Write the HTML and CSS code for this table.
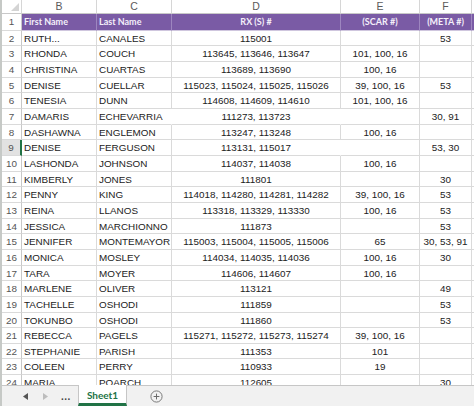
FILE: index.html
```html
<!DOCTYPE html>
<html>
<head>
<meta charset="utf-8">
<link rel="stylesheet" href="styles.css">
</head>
<body>
<div class="app">
  <div class="grid">
    <div class="row colhead">
      <div class="c corner"><svg width="8" height="8" viewBox="0 0 8 8"><polygon points="8,0 8,8 0,8" fill="#d4d4d4"/></svg></div>
      <div class="c">B</div><div class="c">C</div><div class="c">D</div><div class="c">E</div><div class="c">F</div><div class="c end"></div>
    </div>
    <div class="row hdr">
      <div class="c rh">1</div>
      <div class="c p l">First Name</div><div class="c p l">Last Name</div><div class="c p">RX (S) #</div><div class="c p">(SCAR #)</div><div class="c p">(META #)</div><div class="c p end"></div>
    </div>
    <div class="row"><div class="c rh">2</div><div class="c l">RUTH...</div><div class="c l">CANALES</div><div class="c">115001</div><div class="c"></div><div class="c">53</div><div class="c end"></div></div>
    <div class="row"><div class="c rh">3</div><div class="c l">RHONDA</div><div class="c l">COUCH</div><div class="c">113645, 113646, 113647</div><div class="c">101, 100, 16</div><div class="c"></div><div class="c end"></div></div>
    <div class="row"><div class="c rh">4</div><div class="c l">CHRISTINA</div><div class="c l">CUARTAS</div><div class="c">113689, 113690</div><div class="c">100, 16</div><div class="c"></div><div class="c end"></div></div>
    <div class="row"><div class="c rh">5</div><div class="c l">DENISE</div><div class="c l">CUELLAR</div><div class="c">115023, 115024, 115025, 115026</div><div class="c">39, 100, 16</div><div class="c">53</div><div class="c end"></div></div>
    <div class="row"><div class="c rh">6</div><div class="c l">TENESIA</div><div class="c l">DUNN</div><div class="c">114608, 114609, 114610</div><div class="c">101, 100, 16</div><div class="c"></div><div class="c end"></div></div>
    <div class="row"><div class="c rh">7</div><div class="c l">DAMARIS</div><div class="c l nr">ECHEVARRIA</div><div class="c nr">111273, 113723</div><div class="c"></div><div class="c">30, 91</div><div class="c end"></div></div>
    <div class="row"><div class="c rh">8</div><div class="c l">DASHAWNA</div><div class="c l">ENGLEMON</div><div class="c">113247, 113248</div><div class="c">100, 16</div><div class="c"></div><div class="c end"></div></div>
    <div class="row"><div class="c rh sel">9</div><div class="c l">DENISE</div><div class="c l">FERGUSON</div><div class="c nr">113131, 115017</div><div class="c"></div><div class="c">53, 30</div><div class="c end"></div></div>
    <div class="row"><div class="c rh">10</div><div class="c l">LASHONDA</div><div class="c l">JOHNSON</div><div class="c">114037, 114038</div><div class="c">100, 16</div><div class="c"></div><div class="c end"></div></div>
    <div class="row"><div class="c rh">11</div><div class="c l">KIMBERLY</div><div class="c l">JONES</div><div class="c">111801</div><div class="c"></div><div class="c">30</div><div class="c end"></div></div>
    <div class="row"><div class="c rh">12</div><div class="c l">PENNY</div><div class="c l">KING</div><div class="c">114018, 114280, 114281, 114282</div><div class="c">39, 100, 16</div><div class="c">53</div><div class="c end"></div></div>
    <div class="row"><div class="c rh">13</div><div class="c l">REINA</div><div class="c l">LLANOS</div><div class="c">113318, 113329, 113330</div><div class="c">100, 16</div><div class="c">53</div><div class="c end"></div></div>
    <div class="row"><div class="c rh">14</div><div class="c l">JESSICA</div><div class="c l">MARCHIONNO</div><div class="c">111873</div><div class="c"></div><div class="c">53</div><div class="c end"></div></div>
    <div class="row"><div class="c rh">15</div><div class="c l">JENNIFER</div><div class="c l">MONTEMAYOR</div><div class="c">115003, 115004, 115005, 115006</div><div class="c">65</div><div class="c">30, 53, 91</div><div class="c end"></div></div>
    <div class="row"><div class="c rh">16</div><div class="c l">MONICA</div><div class="c l">MOSLEY</div><div class="c">114034, 114035, 114036</div><div class="c">100, 16</div><div class="c">30</div><div class="c end"></div></div>
    <div class="row"><div class="c rh">17</div><div class="c l">TARA</div><div class="c l">MOYER</div><div class="c">114606, 114607</div><div class="c">100, 16</div><div class="c"></div><div class="c end"></div></div>
    <div class="row"><div class="c rh">18</div><div class="c l">MARLENE</div><div class="c l">OLIVER</div><div class="c">113121</div><div class="c"></div><div class="c">49</div><div class="c end"></div></div>
    <div class="row"><div class="c rh">19</div><div class="c l">TACHELLE</div><div class="c l">OSHODI</div><div class="c">111859</div><div class="c"></div><div class="c">53</div><div class="c end"></div></div>
    <div class="row"><div class="c rh">20</div><div class="c l">TOKUNBO</div><div class="c l">OSHODI</div><div class="c">111860</div><div class="c"></div><div class="c">53</div><div class="c end"></div></div>
    <div class="row"><div class="c rh">21</div><div class="c l">REBECCA</div><div class="c l">PAGELS</div><div class="c">115271, 115272, 115273, 115274</div><div class="c">39, 100, 16</div><div class="c"></div><div class="c end"></div></div>
    <div class="row"><div class="c rh">22</div><div class="c l">STEPHANIE</div><div class="c l">PARISH</div><div class="c">111353</div><div class="c">101</div><div class="c"></div><div class="c end"></div></div>
    <div class="row"><div class="c rh">23</div><div class="c l">COLEEN</div><div class="c l">PERRY</div><div class="c">110933</div><div class="c">19</div><div class="c"></div><div class="c end"></div></div>
    <div class="row"><div class="c rh">24</div><div class="c l">MARIA</div><div class="c l">POARCH</div><div class="c">112605</div><div class="c"></div><div class="c">30</div><div class="c end"></div></div>
  </div>
  <div class="tabs">
    <div class="nav">
      <svg class="arr" width="5" height="7" viewBox="0 0 5 7"><polygon points="5,0 5,7 0,3.5" fill="#555"/></svg>
      <svg class="arr arr-r" width="5" height="7" viewBox="0 0 5 7"><polygon points="0,0 0,7 5,3.5" fill="#bdbdbd"/></svg>
      <span class="dots">...</span>
    </div>
    <div class="tab">Sheet1</div>
    <div class="add"><svg width="13" height="13" viewBox="0 0 13 13"><circle cx="6.5" cy="6.5" r="5.6" fill="none" stroke="#7a7a7a" stroke-width="1"/><path d="M6.5 3.6v5.8M3.6 6.5h5.8" stroke="#6a6a6a" stroke-width="1"/></svg></div>
  </div>
</div>
</body>
</html>
```
FILE: styles.css
```css
html, body {
  margin: 0;
  padding: 0;
  background: #fff;
}
body {
  font-family: "Liberation Sans", Arial, sans-serif;
  color: #222;
}
.app {
  width: 474px;
  height: 406px;
  box-sizing: border-box;
  border-left: 2px solid #c6c9c6;
  display: flex;
  flex-direction: column;
  overflow: hidden;
}
.grid {
  height: 385px;
  flex: none;
  overflow: hidden;
}
.row {
  display: grid;
  grid-template-columns: 20px 75px 75px 169px 79px 52px 1fr;
  height: 15.67px;
}
.c {
  box-sizing: border-box;
  border-right: 1px solid #dadada;
  border-bottom: 1px solid #dadada;
  font-size: 9.9px;
  line-height: 15px;
  white-space: nowrap;
  text-align: center;
  overflow: hidden;
  padding: 0 2px;
}
.c.l {
  text-align: left;
}
.c.nr {
  border-right-color: transparent;
}
.c.end {
  border-right: none;
}
.colhead {
  height: 13.5px;
}
.colhead .c {
  font-size: 10.5px;
  line-height: 12.5px;
  color: #5a5a5a;
  border-bottom-color: #c8c8c8;
  border-right-color: #d6d6d6;
}
.corner {
  display: flex;
  align-items: flex-end;
  justify-content: flex-end;
  padding: 0 2px 2px 0;
}
.hdr {
  height: 17.2px;
}
.hdr .c {
  line-height: 16px;
}
.c.p {
  background: #7a5ba5;
  color: #f4effa;
  font-family: Lato, "Open Sans", sans-serif;
  font-weight: 700;
  font-size: 9px;
  border-right-color: #9d86bf;
  border-bottom-color: #cfc6de;
}
.c.rh {
  color: #555;
  font-size: 9.9px;
  padding: 0;
  border-right-color: #c8c8c8;
  border-bottom-color: #dadada;
}
.c.rh.sel {
  background: #e2e2e2;
  border-right: 2px solid #217346;
}
.tabs {
  flex: 1;
  box-sizing: border-box;
  border-top: 1px solid #c6c6c6;
  background: #f1f1f1;
  display: flex;
  align-items: stretch;
}
.nav {
  width: 76px;
  display: flex;
  align-items: center;
  padding-left: 21px;
  box-sizing: border-box;
}
.arr {
  margin-top: 1px;
}
.arr-r {
  margin-left: 15px;
}
.dots {
  margin-left: 13px;
  font-size: 10px;
  font-weight: 700;
  color: #444;
  letter-spacing: 0.5px;
}
.tab {
  width: 49px;
  margin-top: -1px;
  background: #fff;
  border-left: 1px solid #c6c6c6;
  border-right: 1px solid #c6c6c6;
  border-bottom: 3px solid #217346;
  box-sizing: border-box;
  color: #217346;
  font-family: Lato, "Open Sans", sans-serif;
  font-weight: 700;
  font-size: 10px;
  display: flex;
  align-items: center;
  justify-content: center;
  padding-top: 1px;
}
.add {
  margin-left: 23px;
  display: flex;
  align-items: center;
}
```
